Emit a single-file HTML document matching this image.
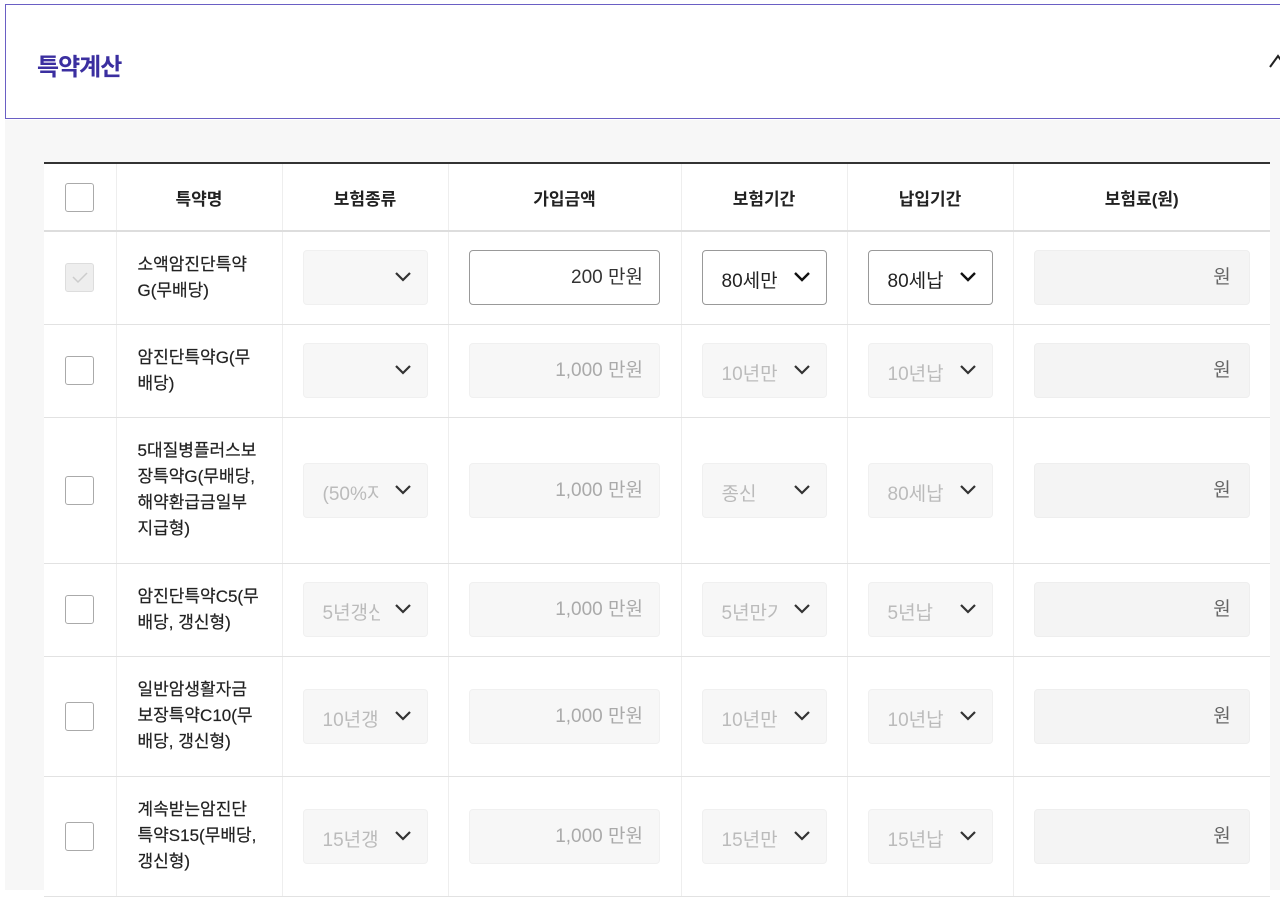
<!DOCTYPE html>
<html><head><meta charset="utf-8"><style>
*{box-sizing:border-box;margin:0;padding:0}
body{width:1280px;height:883px;overflow:hidden;background:#fff;font-family:"Liberation Sans","Noto Sans CJK KR",sans-serif;position:relative}
.hdr{position:absolute;left:5px;top:4px;width:1290px;height:115px;border:1px solid #6a5fc4;background:#fff}
.hdr h1{position:absolute;left:31px;top:42px;font-size:24px;font-weight:bold;color:#3b2fa0;letter-spacing:-1px}
.chev{position:absolute;left:1263px;top:48px}
.bg{position:absolute;left:5px;top:120px;width:1280px;height:770px;background:#f7f7f7}
table{position:absolute;left:44px;top:162px;width:1226px;border-collapse:collapse;background:#fff;border-top:2px solid #333;table-layout:fixed}
td,th{border-left:1px solid #eee;border-bottom:1px solid #e2e2e2;text-align:center;vertical-align:middle;position:relative}
td:first-child,th:first-child{border-left:none}
th{height:68px;font-size:17px;font-weight:bold;color:#222;border-bottom:2px solid #ddd}
.nm{text-align:left;padding:0 20px 0 21px;font-size:17px;line-height:26px;color:#222;font-weight:bold;font-weight:normal;-webkit-text-stroke:0.2px #222}
.cb{display:inline-block;width:29px;height:29px;border:1px solid #aaa;border-radius:3px;background:#fff;vertical-align:middle}
.cb.dis{background:#eee;border-color:#ddd}
.sel{display:inline-block;width:125px;height:55px;border-radius:4px;background:#f7f7f7;border:1px solid #f0f0f0;position:relative;vertical-align:middle;text-align:left}
.sel.on{background:#fff;border:1px solid #999}
.sel span{position:absolute;left:19px;top:15px;width:57px;overflow:hidden;white-space:nowrap;font-size:19px;color:#bbb}
.sel.on span{color:#222}
.sel svg{position:absolute;right:16px;top:21px}
.inp{display:inline-block;width:191px;height:55px;border-radius:4px;background:#f7f7f7;border:1px solid #f0f0f0;text-align:right;padding-right:16px;line-height:53px;font-size:19px;color:#aaa;vertical-align:middle}
.inp.on{background:#fff;border:1px solid #999;color:#333}
.prem{display:inline-block;width:216px;height:55px;border-radius:4px;background:#f4f4f4;border:1px solid #eee;text-align:right;padding-right:18px;line-height:53px;font-size:19px;color:#666;vertical-align:middle}
</style></head><body>
<div class="hdr"><h1>특약계산</h1>
<svg class="chev" width="18" height="16" viewBox="0 0 18 16"><path d="M1 14 L9 3 L17 14" fill="none" stroke="#222" stroke-width="2"/></svg></div>
<div class="bg"></div>
<table>
<colgroup><col style="width:72px"><col style="width:166px"><col style="width:166px"><col style="width:233px"><col style="width:166px"><col style="width:166px"><col style="width:257px"></colgroup>
<tr><th><span class="cb"></span></th><th>특약명</th><th>보험종류</th><th>가입금액</th><th>보험기간</th><th>납입기간</th><th>보험료(원)</th></tr>
<tr style="height:93px"><td><span class="cb dis"><svg width="27" height="27" viewBox="0 0 27 27"><path d="M7 13 L12 18 L21 9" fill="none" stroke="#ccc" stroke-width="1.5"/></svg></span></td><td class="nm">소액암진단특약G(무배당)</td>
<td><span class="sel"><span></span><svg width="16" height="10" viewBox="0 0 16 10"><path d="M1 1 L8 8 L15 1" fill="none" stroke="#333" stroke-width="2.2"/></svg></span></td>
<td><span class="inp on">200 만원</span></td>
<td><span class="sel on"><span>80세만기</span><svg width="16" height="10" viewBox="0 0 16 10"><path d="M1 1 L8 8 L15 1" fill="none" stroke="#111" stroke-width="2.4"/></svg></span></td>
<td><span class="sel on"><span>80세납입</span><svg width="16" height="10" viewBox="0 0 16 10"><path d="M1 1 L8 8 L15 1" fill="none" stroke="#111" stroke-width="2.4"/></svg></span></td>
<td><span class="prem">원</span></td></tr>
<tr style="height:93px"><td><span class="cb"></span></td><td class="nm">암진단특약G(무배당)</td>
<td><span class="sel"><span></span><svg width="16" height="10" viewBox="0 0 16 10"><path d="M1 1 L8 8 L15 1" fill="none" stroke="#333" stroke-width="2.2"/></svg></span></td>
<td><span class="inp">1,000 만원</span></td>
<td><span class="sel"><span>10년만기</span><svg width="16" height="10" viewBox="0 0 16 10"><path d="M1 1 L8 8 L15 1" fill="none" stroke="#333" stroke-width="2.2"/></svg></span></td>
<td><span class="sel"><span>10년납입</span><svg width="16" height="10" viewBox="0 0 16 10"><path d="M1 1 L8 8 L15 1" fill="none" stroke="#333" stroke-width="2.2"/></svg></span></td>
<td><span class="prem">원</span></td></tr>
<tr style="height:146px"><td><span class="cb"></span></td><td class="nm">5대질병플러스보장특약G(무배당, 해약환급금일부지급형)</td>
<td><span class="sel"><span>(50%지급형)</span><svg width="16" height="10" viewBox="0 0 16 10"><path d="M1 1 L8 8 L15 1" fill="none" stroke="#333" stroke-width="2.2"/></svg></span></td>
<td><span class="inp">1,000 만원</span></td>
<td><span class="sel"><span>종신</span><svg width="16" height="10" viewBox="0 0 16 10"><path d="M1 1 L8 8 L15 1" fill="none" stroke="#333" stroke-width="2.2"/></svg></span></td>
<td><span class="sel"><span>80세납입</span><svg width="16" height="10" viewBox="0 0 16 10"><path d="M1 1 L8 8 L15 1" fill="none" stroke="#333" stroke-width="2.2"/></svg></span></td>
<td><span class="prem">원</span></td></tr>
<tr style="height:93px"><td><span class="cb"></span></td><td class="nm">암진단특약C5(무배당, 갱신형)</td>
<td><span class="sel"><span>5년갱신형</span><svg width="16" height="10" viewBox="0 0 16 10"><path d="M1 1 L8 8 L15 1" fill="none" stroke="#333" stroke-width="2.2"/></svg></span></td>
<td><span class="inp">1,000 만원</span></td>
<td><span class="sel"><span>5년만기</span><svg width="16" height="10" viewBox="0 0 16 10"><path d="M1 1 L8 8 L15 1" fill="none" stroke="#333" stroke-width="2.2"/></svg></span></td>
<td><span class="sel"><span>5년납</span><svg width="16" height="10" viewBox="0 0 16 10"><path d="M1 1 L8 8 L15 1" fill="none" stroke="#333" stroke-width="2.2"/></svg></span></td>
<td><span class="prem">원</span></td></tr>
<tr style="height:120px"><td><span class="cb"></span></td><td class="nm">일반암생활자금보장특약C10(무배당, 갱신형)</td>
<td><span class="sel"><span>10년갱신형</span><svg width="16" height="10" viewBox="0 0 16 10"><path d="M1 1 L8 8 L15 1" fill="none" stroke="#333" stroke-width="2.2"/></svg></span></td>
<td><span class="inp">1,000 만원</span></td>
<td><span class="sel"><span>10년만기</span><svg width="16" height="10" viewBox="0 0 16 10"><path d="M1 1 L8 8 L15 1" fill="none" stroke="#333" stroke-width="2.2"/></svg></span></td>
<td><span class="sel"><span>10년납입</span><svg width="16" height="10" viewBox="0 0 16 10"><path d="M1 1 L8 8 L15 1" fill="none" stroke="#333" stroke-width="2.2"/></svg></span></td>
<td><span class="prem">원</span></td></tr>
<tr style="height:120px"><td><span class="cb"></span></td><td class="nm">계속받는암진단특약S15(무배당, 갱신형)</td>
<td><span class="sel"><span>15년갱신형</span><svg width="16" height="10" viewBox="0 0 16 10"><path d="M1 1 L8 8 L15 1" fill="none" stroke="#333" stroke-width="2.2"/></svg></span></td>
<td><span class="inp">1,000 만원</span></td>
<td><span class="sel"><span>15년만기</span><svg width="16" height="10" viewBox="0 0 16 10"><path d="M1 1 L8 8 L15 1" fill="none" stroke="#333" stroke-width="2.2"/></svg></span></td>
<td><span class="sel"><span>15년납입</span><svg width="16" height="10" viewBox="0 0 16 10"><path d="M1 1 L8 8 L15 1" fill="none" stroke="#333" stroke-width="2.2"/></svg></span></td>
<td><span class="prem">원</span></td></tr>
</table>
</body></html>
